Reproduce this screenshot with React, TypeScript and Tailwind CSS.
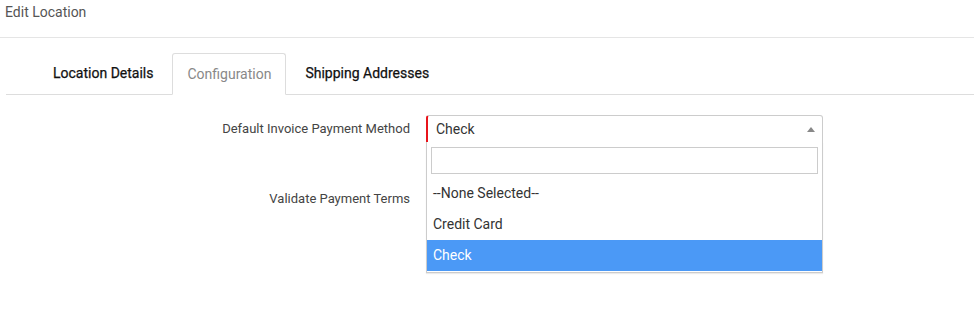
import { useState } from "react";

const TABS = ["Location Details", "Configuration", "Shipping Addresses"];
const OPTIONS = ["--None Selected--", "Credit Card", "Check"];

export default function App() {
  const [active] = useState(1);
  const [selected] = useState("Check");

  return (
    <div className="w-[974px] h-[326px] bg-white text-[14px] text-[#333] font-['Roboto',sans-serif]">
      {/* header */}
      <div className="h-[38px] border-b border-[#e5e5e5] pl-[5px] pt-[3px] text-[#555] leading-[18px]">
        Edit Location
      </div>

      {/* tabs */}
      <div className="ml-[6px] mt-[15px] flex border-b border-[#dddddd] pl-[32px] gap-[4px]">
        {TABS.map((t, i) => (
          <div
            key={t}
            className={
              i === active
                ? "h-[42px] -mb-px px-[14px] flex items-center rounded-t-[3px] border border-b-white border-[#dddddd] bg-white text-[#888]"
                : "h-[41px] px-[14px] flex items-center border border-transparent text-[#111] [-webkit-text-stroke:0.25px_#111]"
            }
          >
            {t}
          </div>
        ))}
      </div>

      {/* form */}
      <div className="mt-[20px] flex flex-col">
        <div className="flex items-center h-[28px]">
          <label className="w-[410px] text-right text-[#444] text-[13px]">
            Default Invoice Payment Method
          </label>
          <div className="relative ml-[16px] w-[397px]">
            <div className="h-[28px] flex items-center justify-between rounded-t-[3px] border border-[#cccccc] border-l-2 border-l-[#e8141b] pl-[8px] pr-[7px]">
              <span className="text-[#333]">{selected}</span>
              <span className="w-0 h-0 border-x-[4px] border-x-transparent border-b-[5px] border-b-[#888]" />
            </div>
            {/* open dropdown */}
            <div className="absolute left-0 top-[27px] w-[397px] border border-t-0 border-[#cccccc] bg-white pb-px shadow-[0_1px_1px_rgba(0,0,0,0.08)]">
              <div className="px-[4px] pt-[5px] pb-[4px]">
                <input className="block w-full h-[27px] border border-[#cccccc] outline-none px-1" />
              </div>
              {OPTIONS.map((o) => (
                <div
                  key={o}
                  className={
                    o === selected
                      ? "h-[31px] flex items-center px-[6px] bg-[#4b99f6] text-white"
                      : "h-[31px] flex items-center px-[6px] text-[#333]"
                  }
                >
                  {o}
                </div>
              ))}
            </div>
          </div>
        </div>

        <div className="flex items-center h-[28px] mt-[42px]">
          <label className="w-[410px] text-right text-[#444] text-[13px]">
            Validate Payment Terms
          </label>
        </div>
      </div>
    </div>
  );
}
